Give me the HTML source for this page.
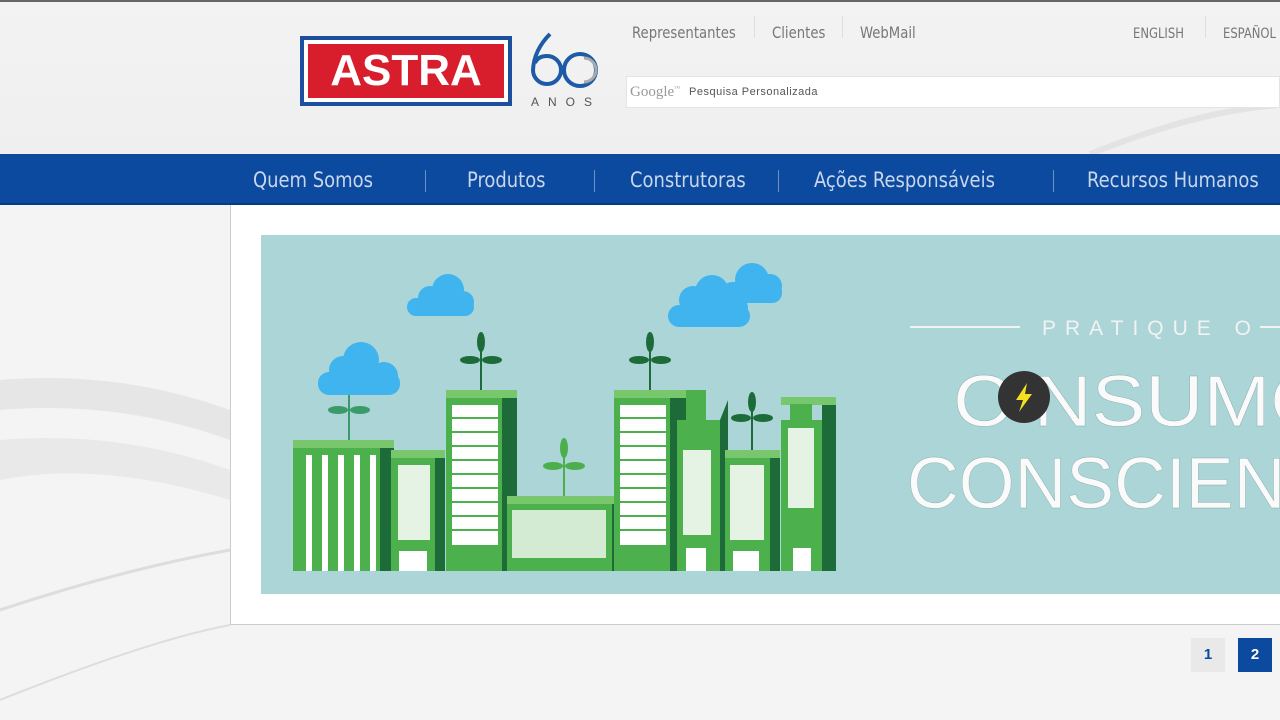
<!DOCTYPE html>
<html><head><meta charset="utf-8"><style>
*{margin:0;padding:0;box-sizing:border-box}
body{width:1280px;height:720px;overflow:hidden;background:#f4f4f4;font-family:"Liberation Sans",sans-serif;position:relative}
.hdr{position:absolute;left:0;top:0;width:1280px;height:154px;background:linear-gradient(#f3f3f3,#efefef);border-top:2px solid #666}
.nav{position:absolute;left:0;top:154px;width:1280px;height:51px;background:#0b4a9e;border-bottom:2px solid #083a80}
.nav span{position:absolute;top:14px;color:#c9d6ec;font-size:21px;font-family:"DejaVu Sans Condensed","Liberation Sans",sans-serif;transform:scaleX(.95);transform-origin:left}
.sep{position:absolute;top:170px;width:1px;height:22px;background:#6d8fc4}
.top a{position:absolute;top:23px;color:#777;font-size:16px;text-decoration:none;font-family:"DejaVu Sans Condensed","Liberation Sans",sans-serif;transform:scaleX(.92);transform-origin:left}
.main{position:absolute;left:230px;top:205px;width:1050px;height:420px;background:#fff;border-left:1px solid #ccc;border-bottom:1px solid #ccc}
.pg{position:absolute;top:638px;width:34px;height:34px;font-size:15px;font-weight:bold;text-align:center;line-height:34px}
</style></head><body>
<div class="hdr"></div>
<svg style="position:absolute;left:0;top:0" width="1280" height="720">
<path d="M0 380 Q120 370 230 410 L230 440 Q120 400 0 410Z" fill="#e6e6e6"/>
<path d="M0 440 Q120 430 230 470 L230 500 Q100 460 0 480Z" fill="#e9e9e9"/>
<path d="M0 610 Q120 570 230 550" stroke="#ddd" stroke-width="3" fill="none"/>
<path d="M0 700 Q150 640 230 625" stroke="#ddd" stroke-width="2" fill="none"/>
<path d="M1090 154 Q1200 110 1280 105" stroke="#e3e3e3" stroke-width="6" fill="none"/>
</svg>
<div style="position:absolute;left:300px;top:36px;width:212px;height:70px;border:4px solid #1d4f9f;background:#fff;padding:4px">
<div style="background:#d81e2c;width:100%;height:100%;color:#fff;font-weight:bold;font-size:44px;line-height:54px;text-align:center">ASTRA</div></div>
<svg style="position:absolute;left:528px;top:30px" width="75" height="80">
<path d="M22 4 Q6 20 5 40 A14 14 0 1 0 19 26 Q10 26 7 33" stroke="#1d5ba6" stroke-width="4" fill="none"/>
<circle cx="52" cy="40" r="16" stroke="#1d5ba6" stroke-width="4" fill="none"/>
<path d="M56 28 A12 12 0 0 1 56 52" stroke="#aaa" stroke-width="3" fill="none"/>
</svg>
<div style="position:absolute;left:531px;top:95px;font-size:12px;letter-spacing:9px;color:#555">ANOS</div>
<div class="top">
<a style="left:632px">Representantes</a><a style="left:772px">Clientes</a><a style="left:860px">WebMail</a>
<a style="left:1133px;font-size:14px;top:26px">ENGLISH</a><a style="left:1223px;font-size:14px;top:26px">ESPAÑOL</a>
</div>
<div style="position:absolute;left:754px;top:16px;width:1px;height:22px;background:#ddd"></div>
<div style="position:absolute;left:842px;top:16px;width:1px;height:22px;background:#ddd"></div>
<div style="position:absolute;left:1205px;top:16px;width:1px;height:22px;background:#ddd"></div>
<div style="position:absolute;left:626px;top:76px;width:654px;height:32px;background:#fff;border:1px solid #e4e4e4">
<span style="position:absolute;left:3px;top:7px;color:#999;font-size:15px;font-family:'Liberation Serif',serif">Google<sup style="font-size:6px">™</sup></span>
<span style="position:absolute;left:62px;top:9px;color:#555;font-size:11px;letter-spacing:.5px">Pesquisa Personalizada</span></div>
<div class="nav"></div>
<div class="nav" style="background:none;border:none">
<span style="left:253px">Quem Somos</span><span style="left:467px">Produtos</span><span style="left:630px">Construtoras</span><span style="left:814px">Ações Responsáveis</span><span style="left:1087px">Recursos Humanos</span></div>
<div class="sep" style="left:425px"></div><div class="sep" style="left:594px"></div><div class="sep" style="left:778px"></div><div class="sep" style="left:1053px"></div>
<div class="main"></div>
<svg style="position:absolute;left:0;top:0" width="1280" height="720">
<rect x="261" y="235" width="1019" height="359" fill="#acd5d7"/>
<g fill="#3fb4ef">
<circle cx="430" cy="298" r="12"/><circle cx="448" cy="290" r="16"/><circle cx="463" cy="302" r="11"/><rect x="407" y="298" width="67" height="18" rx="9"/>
<circle cx="343" cy="370" r="14"/><circle cx="361" cy="360" r="18"/><circle cx="384" cy="376" r="14"/><rect x="318" y="372" width="82" height="23" rx="11"/>
<circle cx="752" cy="280" r="17"/><circle cx="770" cy="286" r="12"/><rect x="722" y="282" width="60" height="21" rx="10"/>
<circle cx="693" cy="300" r="14"/><circle cx="712" cy="292" r="17"/><circle cx="735" cy="308" r="13"/><rect x="668" y="305" width="82" height="22" rx="11"/>
</g>
<g stroke="#1e6b3a" stroke-width="2"><line x1="481" y1="335" x2="481" y2="393"/><line x1="650" y1="335" x2="650" y2="393"/><line x1="752" y1="395" x2="752" y2="452"/></g>
<g fill="#1e6b3a"><ellipse cx="481" cy="342" rx="4" ry="10"/><ellipse cx="470" cy="360" rx="10" ry="4"/><ellipse cx="492" cy="360" rx="10" ry="4"/>
<ellipse cx="650" cy="342" rx="4" ry="10"/><ellipse cx="639" cy="360" rx="10" ry="4"/><ellipse cx="661" cy="360" rx="10" ry="4"/>
<ellipse cx="752" cy="402" rx="4" ry="10"/><ellipse cx="741" cy="418" rx="10" ry="4"/><ellipse cx="763" cy="418" rx="10" ry="4"/></g>
<line x1="349" y1="395" x2="349" y2="440" stroke="#3a9a6a" stroke-width="2"/><ellipse cx="338" cy="410" rx="10" ry="4" fill="#3a9a6a"/><ellipse cx="360" cy="410" rx="10" ry="4" fill="#3a9a6a"/>
<line x1="564" y1="440" x2="564" y2="498" stroke="#4cae4c" stroke-width="2"/><ellipse cx="564" cy="448" rx="4" ry="10" fill="#4cae4c"/><ellipse cx="553" cy="466" rx="10" ry="4" fill="#4cae4c"/><ellipse cx="575" cy="466" rx="10" ry="4" fill="#4cae4c"/>
<g fill="#1e6b3a">
<polygon points="380,447 394,440 394,571 380,571"/><polygon points="435,457 445,450 445,571 435,571"/><polygon points="502,397 517,390 517,571 502,571"/>
<polygon points="612,503 617,498 617,571 612,571"/><polygon points="670,397 686,390 686,571 670,571"/><polygon points="720,420 728,400 728,571 720,571"/>
<polygon points="770,457 780,450 780,571 770,571"/><polygon points="822,404 836,397 836,571 822,571"/></g>
<g fill="#78c76c"><rect x="293" y="440" width="101" height="8"/><rect x="391" y="450" width="54" height="8"/><rect x="446" y="390" width="71" height="8"/><rect x="507" y="496" width="110" height="8"/><rect x="614" y="390" width="72" height="8"/><rect x="725" y="450" width="55" height="8"/><rect x="781" y="397" width="55" height="8"/></g>
<g fill="#4cb14c"><rect x="293" y="448" width="87" height="123"/><rect x="391" y="458" width="44" height="113"/><rect x="446" y="398" width="56" height="173"/><rect x="507" y="504" width="105" height="67"/><rect x="614" y="398" width="56" height="173"/><rect x="677" y="420" width="43" height="151"/><rect x="686" y="390" width="20" height="30"/><rect x="725" y="458" width="45" height="113"/><rect x="781" y="420" width="41" height="151"/><rect x="790" y="404" width="22" height="16"/></g>
<g fill="#fff">
<rect x="306" y="455" width="6" height="116"/><rect x="322" y="455" width="6" height="116"/><rect x="338" y="455" width="6" height="116"/><rect x="354" y="455" width="6" height="116"/><rect x="370" y="455" width="6" height="116"/>
<rect x="398" y="465" width="32" height="75" opacity=".85"/><rect x="399" y="551" width="28" height="20"/>
<rect x="452" y="405" width="46" height="140"/>
<rect x="620" y="405" width="46" height="140"/>
<rect x="512" y="510" width="94" height="48" opacity=".75"/>
<rect x="683" y="450" width="28" height="85" opacity=".85"/><rect x="686" y="548" width="20" height="23"/>
<rect x="730" y="465" width="34" height="75" opacity=".85"/><rect x="733" y="551" width="26" height="20"/>
<rect x="788" y="428" width="26" height="80" opacity=".85"/><rect x="793" y="548" width="18" height="23"/>
</g>
<g stroke="#4cb14c" stroke-width="2">
<line x1="452" y1="418" x2="498" y2="418"/><line x1="452" y1="432" x2="498" y2="432"/><line x1="452" y1="446" x2="498" y2="446"/><line x1="452" y1="460" x2="498" y2="460"/><line x1="452" y1="474" x2="498" y2="474"/><line x1="452" y1="488" x2="498" y2="488"/><line x1="452" y1="502" x2="498" y2="502"/><line x1="452" y1="516" x2="498" y2="516"/><line x1="452" y1="530" x2="498" y2="530"/>
<line x1="620" y1="418" x2="666" y2="418"/><line x1="620" y1="432" x2="666" y2="432"/><line x1="620" y1="446" x2="666" y2="446"/><line x1="620" y1="460" x2="666" y2="460"/><line x1="620" y1="474" x2="666" y2="474"/><line x1="620" y1="488" x2="666" y2="488"/><line x1="620" y1="502" x2="666" y2="502"/><line x1="620" y1="516" x2="666" y2="516"/><line x1="620" y1="530" x2="666" y2="530"/>
</g>
<line x1="910" y1="327" x2="1020" y2="327" stroke="#f2f2f2" stroke-width="2"/><line x1="1260" y1="327" x2="1280" y2="327" stroke="#f2f2f2" stroke-width="2"/>
<text x="1042" y="335" fill="#f2f2f2" font-size="21" letter-spacing="9" font-family="Liberation Sans">PRATIQUE O</text>
<text x="953" y="426" fill="#fafafa" stroke="#8aa" stroke-width=".4" font-size="72" font-family="Liberation Sans" textLength="380" lengthAdjust="spacingAndGlyphs">C  NSUMO</text>
<circle cx="1024" cy="397" r="26" fill="#333"/><path d="M1027 383 L1016 400 L1023 400 L1019 412 L1032 394 L1025 394 Z" fill="#f5e020"/>
<text x="907" y="508" fill="#fafafa" stroke="#8aa" stroke-width=".4" font-size="72" font-family="Liberation Sans" textLength="470" lengthAdjust="spacingAndGlyphs">CONSCIENTE</text>
</svg>
<div class="pg" style="left:1191px;background:#e9e9e9;color:#0b4a9e">1</div>
<div class="pg" style="left:1238px;background:#0b4a9e;color:#fff">2</div>
</body></html>
